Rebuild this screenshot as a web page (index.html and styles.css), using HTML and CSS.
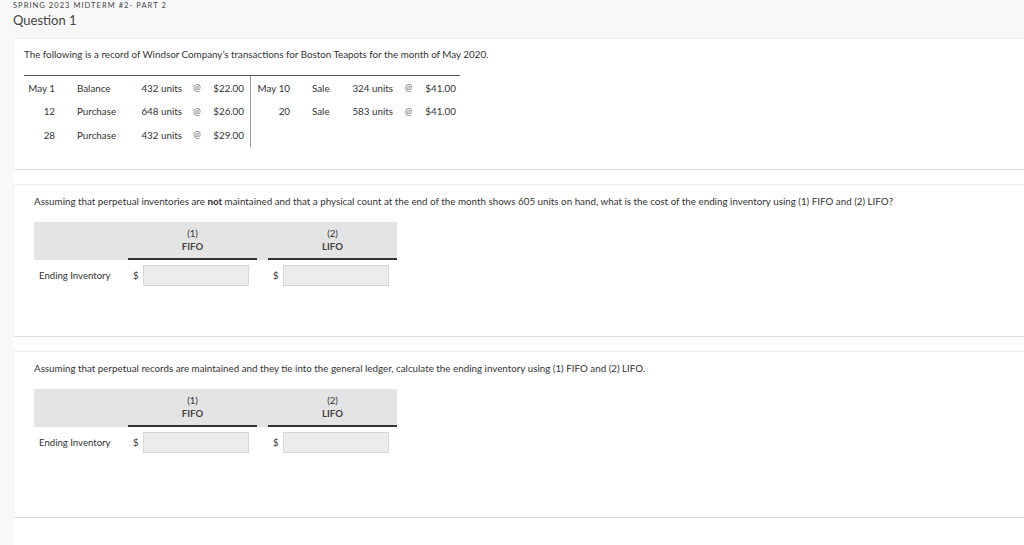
FILE: index.html
```html
<!DOCTYPE html>
<html>
<head>
<meta charset="utf-8">
<link rel="stylesheet" href="styles.css">
</head>
<body>
<div class="page">
  <header class="head">
    <div class="kicker">SPRING 2023 MIDTERM #2- PART 2</div>
    <h1 class="title">Question 1</h1>
  </header>
  <div class="stack">
    <section class="card card-intro">
      <p class="lead">The following is a record of Windsor Company’s transactions for Boston Teapots for the month of May 2020.</p>
      <div class="ledger">
        <div class="half half-left">
          <div class="lrow"><span class="d">May 1</span><span class="t">Balance</span><span class="u">432 units</span><span class="at">@</span><span class="p">$22.00</span></div>
          <div class="lrow"><span class="d">12</span><span class="t">Purchase</span><span class="u">648 units</span><span class="at">@</span><span class="p">$26.00</span></div>
          <div class="lrow"><span class="d">28</span><span class="t">Purchase</span><span class="u">432 units</span><span class="at">@</span><span class="p">$29.00</span></div>
        </div>
        <div class="half half-right">
          <div class="lrow"><span class="d">May 10</span><span class="t">Sale</span><span class="u">324 units</span><span class="at">@</span><span class="p">$41.00</span></div>
          <div class="lrow"><span class="d">20</span><span class="t">Sale</span><span class="u">583 units</span><span class="at">@</span><span class="p">$41.00</span></div>
        </div>
      </div>
    </section>

    <section class="card card-q card-q1">
      <p class="qtext">Assuming that perpetual inventories are <b>not</b> maintained and that a physical count at the end of the month shows 605 units on hand, what is the cost of the ending inventory using (1) FIFO and (2) LIFO?</p>
      <div class="answer">
        <div class="ahead">
          <div class="hcell hlabel"></div>
          <div class="hcell">(1)<br><b>FIFO</b></div>
          <div class="hcell hcell-2">(2)<br><b>LIFO</b></div>
        </div>
        <div class="arow">
          <div class="alabel">Ending Inventory</div>
          <div class="acell"><span class="cur">$</span><span class="box"></span></div>
          <div class="acell acell-2"><span class="cur">$</span><span class="box"></span></div>
        </div>
      </div>
    </section>

    <section class="card card-q card-q2">
      <p class="qtext">Assuming that perpetual records are maintained and they tie into the general ledger, calculate the ending inventory using (1) FIFO and (2) LIFO.</p>
      <div class="answer">
        <div class="ahead">
          <div class="hcell hlabel"></div>
          <div class="hcell">(1)<br><b>FIFO</b></div>
          <div class="hcell hcell-2">(2)<br><b>LIFO</b></div>
        </div>
        <div class="arow">
          <div class="alabel">Ending Inventory</div>
          <div class="acell"><span class="cur">$</span><span class="box"></span></div>
          <div class="acell acell-2"><span class="cur">$</span><span class="box"></span></div>
        </div>
      </div>
    </section>

    <div class="tail"></div>
  </div>
</div>
</body>
</html>
```
FILE: styles.css
```css
* { box-sizing: border-box; }
html, body { margin: 0; padding: 0; }
body {
  background: #f8f8f8;
  font-family: Lato, "Open Sans", sans-serif;
  color: #333;
  width: 1024px;
  height: 545px;
  overflow: hidden;
}
.page { padding-left: 13px; }
.head { height: 38px; padding-top: 1px; }
.kicker {
  font-size: 7.5px;
  letter-spacing: 1.05px;
  color: #444;
  line-height: 10px;
}
.title {
  margin: 0;
  font-size: 13px;
  font-weight: 400;
  color: #444;
  line-height: 16px;
  margin-top: 1px;
}
.stack {
  background: #fff;
  display: flex;
  flex-direction: column;
  gap: 14px;
  margin-right: -20px;
}
.card {
  background: #fff;
  border: 1px solid #eeeeee;
  border-bottom-color: #dcdcdc;
  border-right: none;
  border-radius: 2px 0 0 2px;
}
.card-intro { height: 132px; padding: 8px 0 0 10px; }
.lead { margin: 0; font-size: 9.8px; line-height: 14px; color: #333; }
.ledger {
  display: flex;
  margin-top: 14px;
  width: 436px;
  border-top: 1px solid #555;
}
.half { padding-top: 0; padding-bottom: 0; }
.half-right { border-left: 1px solid #999; }
.lrow { display: flex; height: 23.5px; align-items: center; font-size: 9.8px; color: #333; }
.lrow span { white-space: nowrap; }
.d { width: 31px; text-align: right; }
.t { width: 63px; padding-left: 22px; box-sizing: content-box; }
.u { width: 42px; text-align: right; }
.at { width: 30px; text-align: center; font-size: 9px; color: #666; }
.p { width: 32px; text-align: right; }
.half-left .p { width: 38px; padding-right: 6px; }
.half-right .d { width: 39px; }
.half-right .t { width: 40px; padding-left: 22px; }
.half-right .u { width: 41px; }
.half-right .at { width: 31px; }

.card-q { padding: 8px 0 0 20px; }
.card-q1 { height: 153px; }
.card-q2 { height: 167px; }
.qtext { margin: 0; font-size: 9.8px; line-height: 16px; }
.answer { width: 363px; }
.card-q1 .answer { margin-top: 13px; }
.card-q2 .answer { margin-top: 13px; }
.ahead, .arow {
  display: grid;
  grid-template-columns: 94px 129px 140px;
}
.ahead {
  background: #e4e4e4;
  height: 38px;
}
.hcell {
  text-align: center;
  font-size: 9.6px;
  line-height: 13px;
  padding-top: 5px;
  border-bottom: 2px solid #333;
  color: #333;
}
.hcell-2 { margin-left: 11px; }
.hcell b { font-weight: 700; color: #444; }
.hlabel { border-bottom: none; }
.arow {
  align-items: center;
  height: 31px;
}
.alabel { font-size: 9.6px; padding-left: 5px; color: #333; }
.acell { display: flex; align-items: center; padding-left: 5px; }
.acell-2 { margin-left: 11px; }
.cur { font-size: 9.6px; width: 10px; color: #333; }
.box {
  width: 106px;
  height: 21px;
  background: #ececec;
  border: 1px solid #d6d6d6;
}
.tail { height: 40px; background: #fff; }
```
